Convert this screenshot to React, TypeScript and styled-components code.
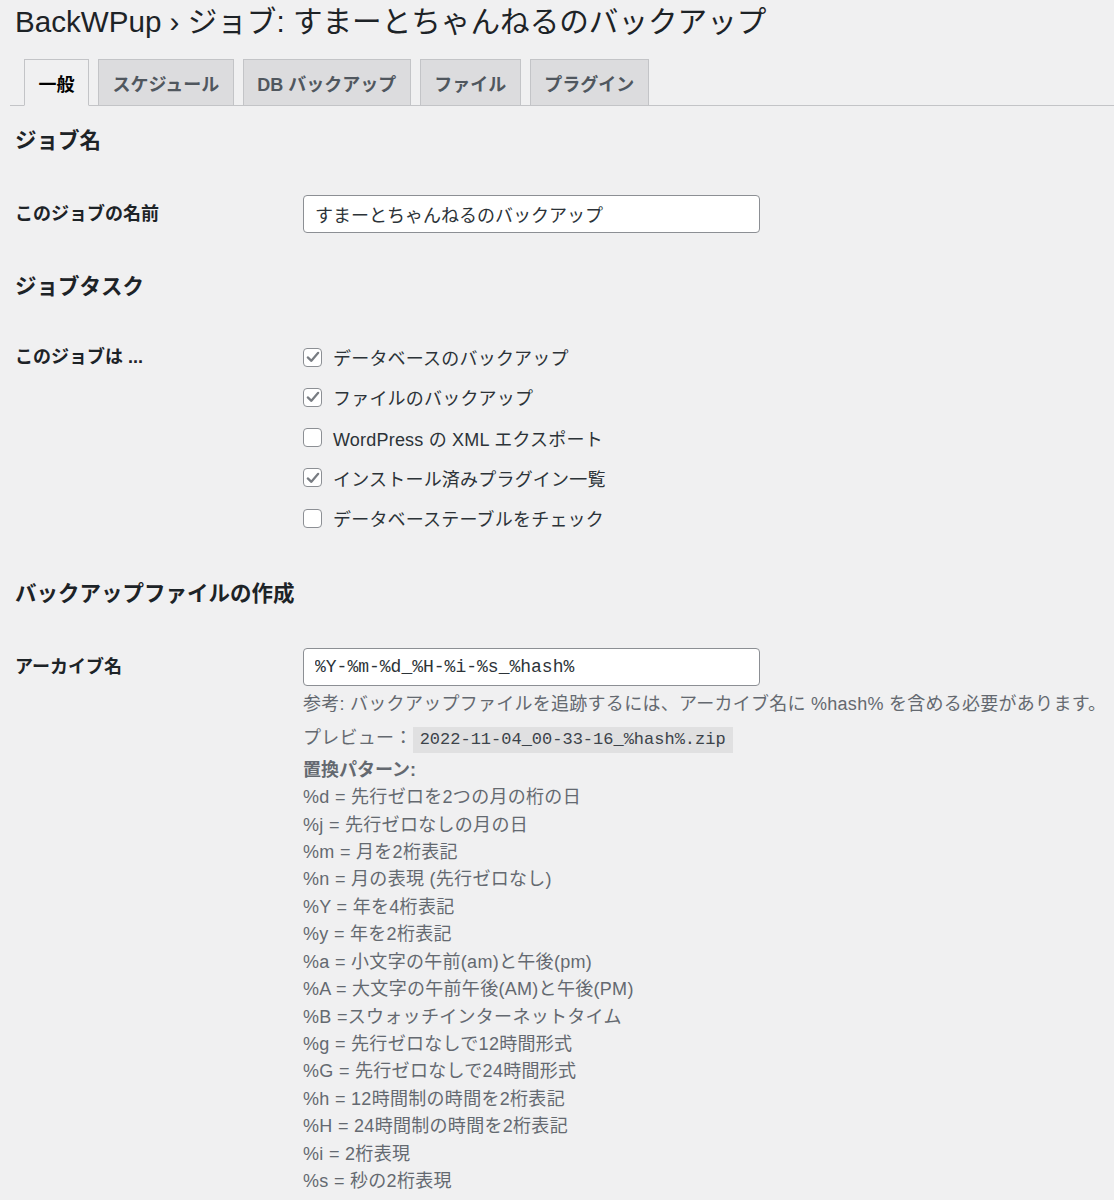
import React from "react";
import styled, { createGlobalStyle } from "styled-components";

const Global = createGlobalStyle`
  html, body { margin: 0; padding: 0; background: #f0f0f1; }
  body {
    font-family: "Liberation Sans", "Noto Sans CJK JP", sans-serif;
    color: #1d2327;
    font-size: 18px;
  }
`;

const Page = styled.div`
  padding: 3px 0 0 15px;
  min-height: 1200px;
  box-sizing: border-box;
  overflow: hidden;
`;

const Title = styled.h1`
  margin: 0;
  font-size: 29.6px;
  line-height: 38px;
  font-weight: 400;
  color: #1d2327;
  white-space: nowrap;
`;

const TabBar = styled.nav`
  display: flex;
  align-items: flex-end;
  gap: 9px;
  margin: 18px 0 0 -5px;
  padding-left: 14px;
  border-bottom: 1px solid #c3c4c7;
`;

const Tab = styled.a<{ $active?: boolean }>`
  display: flex;
  align-items: center;
  box-sizing: border-box;
  height: 47px;
  margin-bottom: -1px;
  padding: 0 13.5px;
  font-size: 18px;
  font-weight: 700;
  white-space: nowrap;
  border: 1px solid #c3c4c7;
  border-bottom-color: ${(p) => (p.$active ? "#f0f0f1" : "#c3c4c7")};
  background: ${(p) => (p.$active ? "#f0f0f1" : "#dcdcde")};
  color: ${(p) => (p.$active ? "#000" : "#50575e")};
  cursor: pointer;
`;

const SectionTitle = styled.h2<{ $top: number }>`
  margin: ${(p) => p.$top}px 0 0;
  font-size: 21.5px;
  line-height: 30px;
  font-weight: 700;
  color: #1d2327;
`;

const FieldRow = styled.div<{ $top: number }>`
  display: grid;
  grid-template-columns: 288px 1fr;
  align-items: start;
  margin-top: ${(p) => p.$top}px;
`;

const Label = styled.div<{ $lh: number }>`
  font-size: 18px;
  font-weight: 700;
  line-height: ${(p) => p.$lh}px;
  color: #1d2327;
  white-space: nowrap;
`;

const Field = styled.div`
  display: flex;
  flex-direction: column;
`;

const TextInput = styled.input<{ $mono?: boolean }>`
  box-sizing: border-box;
  width: 457px;
  height: 38px;
  padding: 0 11px;
  border: 1px solid #8c8f94;
  border-radius: 4px;
  background: #fff;
  color: #2c3338;
  font-family: ${(p) =>
    p.$mono
      ? `"Liberation Mono", "Noto Sans CJK JP", monospace`
      : `"Liberation Sans", "Noto Sans CJK JP", sans-serif`};
  font-size: 18px;
  outline: none;
`;

const CheckRow = styled.label`
  display: flex;
  align-items: center;
  gap: 11px;
  height: 40.25px;
  font-size: 18px;
  letter-spacing: 0.2px;
  color: #2c3338;
  white-space: nowrap;
`;

const Box = styled.span`
  display: inline-flex;
  align-items: center;
  justify-content: center;
  box-sizing: border-box;
  width: 19px;
  height: 19px;
  border: 1px solid #8c8f94;
  border-radius: 4px;
  background: #fff;
  flex: none;
`;

const Desc = styled.p<{ $top?: number }>`
  margin: ${(p) => p.$top ?? 0}px 0 0;
  font-size: 18px;
  line-height: 27px;
  letter-spacing: 0.27px;
  color: #646970;
  white-space: nowrap;
`;

const Code = styled.code`
  display: inline-block;
  padding: 0 7px;
  line-height: 26px;
  letter-spacing: 0;
  background: #e0e0e1;
  color: #3c434a;
  font-family: "Liberation Mono", monospace;
  font-size: 17px;
`;

const Strong = styled.strong`
  font-weight: 700;
  letter-spacing: 0;
`;

const PatternLine = styled.div`
  font-size: 18px;
  line-height: 27.4px;
  letter-spacing: 0.3px;
  color: #646970;
  white-space: nowrap;
`;

const Checkbox = ({ checked }: { checked: boolean }) => (
  <Box>
    {checked && (
      <svg width="16" height="16" viewBox="0 0 20 20">
        <path
          d="M3.5 10.5 L8 14.8 L16.5 4.8"
          fill="none"
          stroke="#787c82"
          strokeWidth="2.8"
          strokeLinecap="round"
          strokeLinejoin="round"
        />
      </svg>
    )}
  </Box>
);

const tasks: [string, boolean][] = [
  ["データベースのバックアップ", true],
  ["ファイルのバックアップ", true],
  ["WordPress の XML エクスポート", false],
  ["インストール済みプラグイン一覧", true],
  ["データベーステーブルをチェック", false],
];

const patterns = [
  "%d = 先行ゼロを2つの月の桁の日",
  "%j = 先行ゼロなしの月の日",
  "%m = 月を2桁表記",
  "%n = 月の表現 (先行ゼロなし)",
  "%Y = 年を4桁表記",
  "%y = 年を2桁表記",
  "%a = 小文字の午前(am)と午後(pm)",
  "%A = 大文字の午前午後(AM)と午後(PM)",
  "%B =スウォッチインターネットタイム",
  "%g = 先行ゼロなしで12時間形式",
  "%G = 先行ゼロなしで24時間形式",
  "%h = 12時間制の時間を2桁表記",
  "%H = 24時間制の時間を2桁表記",
  "%i = 2桁表現",
  "%s = 秒の2桁表現",
];

const tabs = ["一般", "スケジュール", "DB バックアップ", "ファイル", "プラグイン"];

export default function App() {
  return (
    <Page>
      <Global />
      <Title>BackWPup › ジョブ: すまーとちゃんねるのバックアップ</Title>
      <TabBar>
        {tabs.map((t, i) => (
          <Tab key={t} $active={i === 0}>
            {t}
          </Tab>
        ))}
      </TabBar>

      <SectionTitle $top={20}>ジョブ名</SectionTitle>
      <FieldRow $top={39}>
        <Label $lh={38}>このジョブの名前</Label>
        <Field>
          <TextInput defaultValue="すまーとちゃんねるのバックアップ" />
        </Field>
      </FieldRow>

      <SectionTitle $top={39}>ジョブタスク</SectionTitle>
      <FieldRow $top={35}>
        <Label $lh={40}>このジョブは ...</Label>
        <Field>
          {tasks.map(([t, c]) => (
            <CheckRow key={t}>
              <Checkbox checked={c} />
              {t}
            </CheckRow>
          ))}
        </Field>
      </FieldRow>

      <SectionTitle $top={41}>バックアップファイルの作成</SectionTitle>
      <FieldRow $top={39}>
        <Label $lh={38}>アーカイブ名</Label>
        <Field>
          <TextInput $mono defaultValue="%Y-%m-%d_%H-%i-%s_%hash%" />
          <Desc $top={5}>
            参考: バックアップファイルを追跡するには、アーカイブ名に %hash% を含める必要があります。
          </Desc>
          <Desc $top={7}>
            プレビュー：<Code>2022-11-04_00-33-16_%hash%.zip</Code>
          </Desc>
          <Desc $top={4}>
            <Strong>置換パターン:</Strong>
          </Desc>
          {patterns.map((p) => (
            <PatternLine key={p}>{p}</PatternLine>
          ))}
        </Field>
      </FieldRow>
    </Page>
  );
}
